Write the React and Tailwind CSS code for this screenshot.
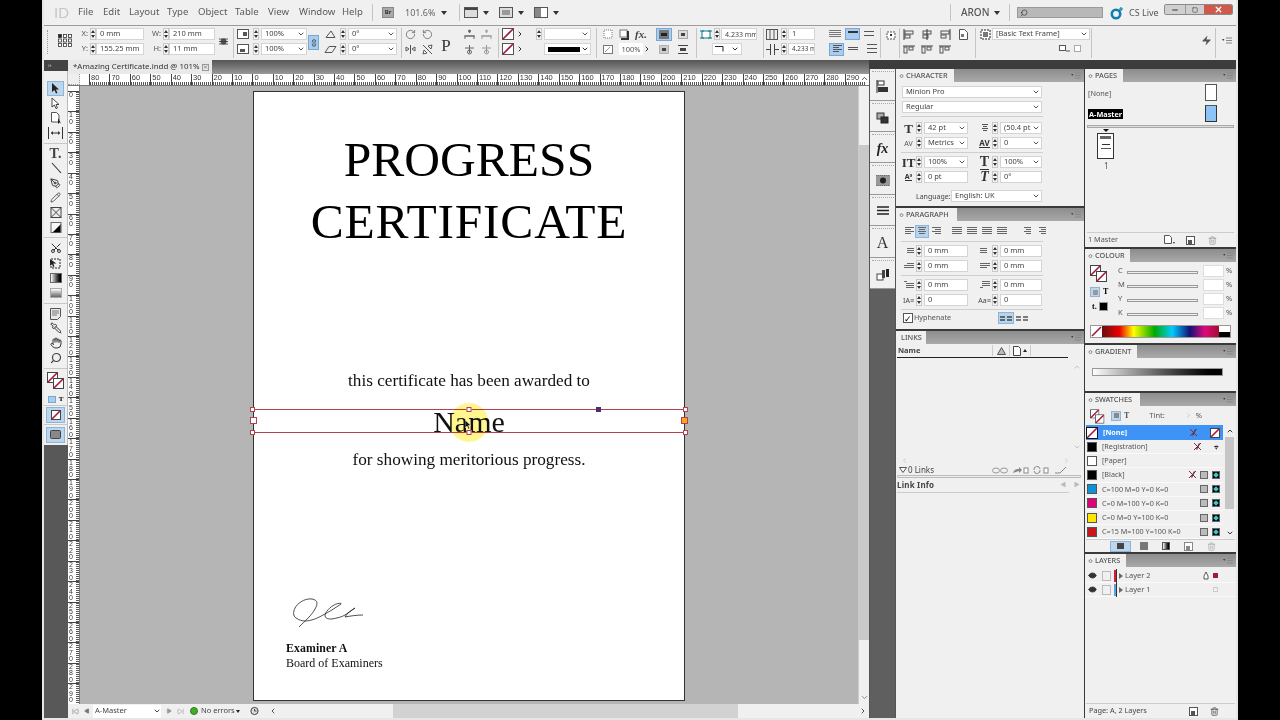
import { ChevronDown, ChevronUp, ChevronLeft, ChevronRight, Scissors, Hand, Search, Pipette, Pencil, PenTool, Eye, Trash2, Zap, RotateCw, RotateCcw, Link2, Minus, X, Square, SkipBack, SkipForward, Play } from "lucide-react";

const UI = "font-['Noto_Sans',sans-serif]";

function Ic({ w = 12, h = 12, children, className = "" }) {
  return <svg width={w} height={h} viewBox={`0 0 ${w} ${h}`} className={`shrink-0 ${className}`}>{children}</svg>;
}

// stacked little bars, used for all the align / justify glyphs
function Bars({ rows, w = 12, color = "#555" }) {
  return (
    <Ic w={w} h={rows.length * 2}>
      {rows.map((r, i) => <rect key={i} x={r[0]} y={i * 2} width={r[1]} height="1" fill={color} />)}
    </Ic>
  );
}

function NoneBox({ s = 12, border = "#444" }) {
  return (
    <Ic w={s} h={s}>
      <rect x=".5" y=".5" width={s - 1} height={s - 1} fill="#fff" stroke={border} />
      <line x1="1" y1={s - 1} x2={s - 1} y2="1" stroke="#a3173a" strokeWidth="1.6" />
    </Ic>
  );
}

function Spin() {
  return (
    <div className="w-[6px] h-[12px] shrink-0 flex flex-col items-center justify-center gap-[2px] bg-[#f6f6f6] border border-[#c8c8c8]">
      <div className="w-0 h-0 border-x-[2px] border-x-transparent border-b-[3px] border-b-[#333]" />
      <div className="w-0 h-0 border-x-[2px] border-x-transparent border-t-[3px] border-t-[#333]" />
    </div>
  );
}

function Box({ w, value = "", select, h = "h-[12px]", text = "text-[7.5px]" }) {
  return (
    <div style={{ width: w }} className={`${h} ${text} shrink-0 bg-white border border-[#d4d4d4] flex items-center justify-between pl-[3px] pr-[1px] text-[#444] leading-none whitespace-nowrap overflow-hidden`}>
      <span>{value}</span>
      {select && <ChevronDown size={8} strokeWidth={2.5} className="text-[#333] shrink-0" />}
    </div>
  );
}

function Label({ children, w = 14 }) {
  return <span style={{ width: w }} className="shrink-0 text-[7.5px] text-[#555] text-right pr-[2px] leading-none">{children}</span>;
}

function Divider({ ml = 3, mr = 3 }) {
  return <div style={{ marginLeft: ml, marginRight: mr }} className="w-px h-[30px] bg-[#c4c4c4] shrink-0" />;
}

function Col({ w, ml = 0, children }) {
  return <div style={{ width: w, marginLeft: ml }} className="shrink-0 flex flex-col gap-[3px]">{children}</div>;
}

function Row({ children, className = "" }) {
  return <div className={`h-[12px] flex items-center ${className}`}>{children}</div>;
}

function RefPoints() {
  const pts = [];
  for (let r = 0; r < 3; r++) for (let c = 0; c < 3; c++) pts.push([c, r]);
  return (
    <Ic w={14} h={13}>
      {pts.map(([c, r]) => (
        <rect key={`${c}${r}`} x={c * 5 + .5} y={r * 4.5 + .5} width="3" height="3" fill={c === 0 && r === 0 ? "#222" : "#fff"} stroke="#333" strokeWidth=".8" />
      ))}
    </Ic>
  );
}

function MiniBtn({ active, children }) {
  return (
    <div className={`w-[16px] h-[13px] flex items-center justify-center ${active ? "bg-[#a9cdf0] border border-[#7aa7d2]" : ""}`}>{children}</div>
  );
}

const ALIGN_ROWS = [[1, 9], [1, 6], [1, 9], [1, 6]];
const FULL_ROWS = [[0, 11], [0, 11], [0, 11], [0, 11]];

function MenuBar() {
  const items = [["File", 25], ["Edit", 26], ["Layout", 38], ["Type", 31], ["Object", 37], ["Table", 33], ["View", 31], ["Window", 43], ["Help", 30]];
  return (
    <div className={`h-[26px] shrink-0 bg-[#f0f0f0] border-b border-[#9c9c9c] flex items-center text-[#5a5a5a] text-[9.6px] ${UI}`}>
      <span className="w-[34px] pl-[10px] text-[15px] font-['Liberation_Sans',sans-serif] text-[#c6c6c6] leading-none">ID</span>
      {items.map(([t, w]) => <span key={t} style={{ width: w }} className="shrink-0">{t}</span>)}
      <div className="w-px h-[17px] bg-[#c4c4c4] mr-[9px]" />
      <div className="w-[12px] h-[11px] bg-[#a9a9a9] border border-[#888] text-[6px] text-[#333] flex items-center justify-center font-bold mr-[11px]">Br</div>
      <span className="w-[36px] text-[9px] text-[#666]">101.6%</span>
      <div className="w-0 h-0 border-x-[3px] border-x-transparent border-t-[4px] border-t-[#333] mr-[12px]" />
      <div className="w-px h-[17px] bg-[#c4c4c4] mr-[4px]" />
      {[0, 1, 2].map(i => (
        <div key={i} className="flex items-center w-[35px]">
          <Ic w={14} h={11}>
            <rect x=".5" y=".5" width="13" height="10" fill={i === 2 ? "#fff" : "#ddd"} stroke="#555" />
            {i === 0 && <rect x="1" y="1" width="12" height="2" fill="#444" />}
            {i === 1 && <rect x="3" y="3" width="8" height="5" fill="#999" />}
            {i === 2 && <rect x="1" y="1" width="6" height="9" fill="#888" />}
          </Ic>
          <div className="ml-[5px] w-0 h-0 border-x-[3px] border-x-transparent border-t-[4px] border-t-[#333]" />
        </div>
      ))}
      <div className="ml-auto w-px h-[17px] bg-[#c4c4c4] mr-[10px]" />
      <span className="text-[10px] font-medium text-[#555] w-[33px]">ARON</span>
      <div className="w-0 h-0 border-x-[3px] border-x-transparent border-t-[4px] border-t-[#333] mr-[9px]" />
      <div className="w-px h-[17px] bg-[#c4c4c4] mr-[7px]" />
      <div className="w-[86px] h-[11px] bg-[#b8b8b8] border border-[#9a9a9a] flex items-center pl-[2px] mr-[6px]">
        <Search size={8} className="text-[#333] -scale-x-100" />
      </div>
      <Ic w={15} h={14} className="mr-[5px]">
        <circle cx="7" cy="8" r="4.2" fill="none" stroke="#0c7fb0" strokeWidth="2.6" />
        <path d="M12 1v4M10 3h4" stroke="#0c7fb0" strokeWidth="1.2" />
      </Ic>
      <span className="text-[9px] text-[#555] w-[35px]">CS Live</span>
      <div className="flex h-[11px] mr-[3px] mb-[6px] border border-[#8a8a8a] rounded-[2px] overflow-hidden">
        <div className="w-[20px] bg-[#cfcfcf] flex items-center justify-center"><Minus size={8} strokeWidth={3} className="text-[#333]" /></div>
        <div className="w-[19px] bg-[#cfcfcf] border-l border-[#999] flex items-center justify-center"><Square size={6} strokeWidth={2} className="text-[#333]" /></div>
        <div className="w-[28px] bg-[#cd5a4b] flex items-center justify-center"><X size={9} strokeWidth={3.5} className="text-white" /></div>
      </div>
    </div>
  );
}

function ControlBar() {
  return (
    <div className={`h-[34px] shrink-0 bg-[#efefef] flex items-start pt-[2px] ${UI}`}>
      <div className="w-[8px] shrink-0 mt-[2px] ml-[3px] h-[24px] border-l border-dotted border-[#999]" />
      <div className="w-[19px] shrink-0 flex justify-center pt-[6px]"><RefPoints /></div>
      <Col w={72} ml={2}>
        <Row><Label>X:</Label><Spin /><Box w={48} value="0 mm" /></Row>
        <Row><Label>Y:</Label><Spin /><Box w={48} value="155.25 mm" /></Row>
      </Col>
      <Col w={68} ml={0}>
        <Row><Label w={15}>W:</Label><Spin /><Box w={46} value="210 mm" /></Row>
        <Row><Label w={15}>H:</Label><Spin /><Box w={46} value="11 mm" /></Row>
      </Col>
      <div className="w-[14px] shrink-0 flex justify-center pt-[9px]">
        <Ic w={9} h={9}><circle cx="4.5" cy="4.5" r="3" fill="#555" /><path d="M0 2h9M0 4.5h9M0 7h9" stroke="#333" strokeWidth=".8" /></Ic>
      </div>
      <Divider />
      <Col w={71}>
        <Row><Ic w={15} h={10} className="mr-[1px]"><rect x=".5" y=".5" width="11" height="9" fill="#fff" stroke="#555" /><rect x="6" y="3" width="4" height="4" fill="#555" /></Ic><Spin /><div className="w-[2px]" /><Box w={46} value="100%" select /></Row>
        <Row><Ic w={15} h={10} className="mr-[1px]"><rect x=".5" y=".5" width="11" height="9" fill="#fff" stroke="#555" /><rect x="3" y="5" width="5" height="3" fill="#555" /></Ic><Spin /><div className="w-[2px]" /><Box w={46} value="100%" select /></Row>
      </Col>
      <div className="w-[11px] h-[15px] mt-[7px] shrink-0 bg-[#a9cdf0] border border-[#7aa7d2] flex items-center justify-center"><Link2 size={8} className="rotate-90 text-[#222]" /></div>
      <Col w={76} ml={4}>
        <Row><Ic w={17} h={10}><path d="M3 8.5h9L8 2z" fill="none" stroke="#555" /></Ic><Spin /><div className="w-[2px]" /><Box w={49} value="0°" select /></Row>
        <Row><Ic w={17} h={10}><path d="M2 8.5h7l4-6H6z" fill="none" stroke="#555" /></Ic><Spin /><div className="w-[2px]" /><Box w={49} value="0°" select /></Row>
      </Col>
      <Divider ml={2} />
      <Col w={30}>
        <Row className="gap-[6px]"><RotateCw size={11} className="text-[#777]" /><RotateCcw size={11} className="text-[#777]" /></Row>
        <Row className="gap-[6px]">
          <Ic w={11} h={11}><path d="M5.5 1v9M1 3l3 2-3 2zM10 3L7 5l3 2z" fill="#fff" stroke="#555" /></Ic>
          <Ic w={11} h={11}><path d="M1 1l9 9M1 10l4-1-3-3zM10 1L6 2l3 3z" fill="#fff" stroke="#555" /></Ic>
        </Row>
      </Col>
      <div className="w-[22px] shrink-0 text-center font-['Liberation_Serif',serif] text-[17px] leading-none pt-[9px] text-[#333]">P</div>
      <Col w={34} ml={6}>
        <Row className="gap-[4px]">
          {[0, 1].map(i => <Ic key={i} w={13} h={11}><path d="M6.5 1v3M2 10V7h9v3M1 7h11" stroke={i ? "#999" : "#666"} fill="none" /><circle cx="6.5" cy="2" r="1.5" fill={i ? "#aaa" : "#666"} /></Ic>)}
        </Row>
        <Row className="gap-[4px]">
          {[0, 1].map(i => <Ic key={i} w={13} h={11}><path d="M6.5 1v8M2 4h9" stroke={i ? "#999" : "#666"} fill="none" /><circle cx="6.5" cy="8" r="2" fill="none" stroke={i ? "#999" : "#666"} /></Ic>)}
        </Row>
      </Col>
      <Divider ml={1} />
      <Col w={26}>
        <Row><NoneBox s={12} border="#555" /><ChevronRight size={8} strokeWidth={3} className="ml-[2px] text-[#333]" /></Row>
        <Row><NoneBox s={12} border="#555" /><ChevronRight size={8} strokeWidth={3} className="ml-[2px] text-[#333]" /></Row>
      </Col>
      <Col w={58} ml={8}>
        <Row><Spin /><div className="w-[2px]" /><Box w={47} select /></Row>
        <Row><div className="w-[8px] shrink-0" /><div className="w-[47px] h-[12px] bg-white border border-[#d4d4d4] flex items-center justify-between pl-[3px] pr-[1px]"><div className="w-[32px] h-[5px] bg-black" /><ChevronDown size={8} strokeWidth={2.5} /></div></Row>
      </Col>
      <Divider ml={2} />
      <Col w={52} ml={3}>
        <Row className="gap-[5px]">
          <Ic w={11} h={11}><rect x="1" y="1" width="8" height="8" fill="#fff" stroke="#777" strokeDasharray="1 1" /></Ic>
          <Ic w={11} h={11}><rect x="1" y="1" width="7" height="7" fill="#fff" stroke="#777" /><path d="M9 2v8H2" stroke="#333" strokeWidth="2" fill="none" /></Ic>
          <span className="font-['Liberation_Serif',serif] italic font-bold text-[11px] text-[#444] leading-none">fx.</span>
        </Row>
        <Row>
          <Ic w={11} h={11}><rect x=".5" y="1.5" width="9" height="8" fill="#fff" stroke="#777" /><path d="M2 8l5-5" stroke="#999" /></Ic>
          <span className="ml-[5px] w-[24px] bg-white text-[7.5px] text-[#555] text-center leading-[12px]">100%</span>
          <ChevronRight size={8} strokeWidth={3} className="text-[#333]" />
        </Row>
      </Col>
      <Col w={38} ml={1}>
        <Row className="gap-[3px]"><MiniBtn active><Ic w={10} h={9}><rect width="10" height="9" fill="#777" /><rect x="2" y="3" width="6" height="3" fill="#222" /></Ic></MiniBtn><MiniBtn><Ic w={10} h={9}><rect x=".5" y=".5" width="9" height="8" fill="#ddd" stroke="#666" strokeDasharray="1 1" /><rect x="3" y="3" width="4" height="3" fill="#444" /></Ic></MiniBtn></Row>
        <Row className="gap-[3px]"><MiniBtn><Ic w={10} h={9}><rect x=".5" y=".5" width="9" height="8" fill="#ccc" stroke="#888" strokeDasharray="1 1" /><rect x="3" y="3" width="4" height="3" fill="#444" /></Ic></MiniBtn><MiniBtn><Ic w={10} h={9}><path d="M0 .5h10M0 8.5h10" stroke="#444" /><rect x="2" y="3" width="6" height="3" fill="#444" /></Ic></MiniBtn></Row>
      </Col>
      <Divider ml={2} />
      <Col w={58}>
        <Row><Ic w={13} h={11} className="mr-[1px]"><rect x="2" y="2" width="8" height="7" fill="#fff" stroke="#0e7a8a" /><path d="M0 2h4M8 2h4M0 9h4M8 9h4" stroke="#0e7a8a" /></Ic><Spin /><div className="w-[1px]" /><Box w={36} text="text-[7px]" value="4.233 mm" /></Row>
        <Row className="pl-[12px]"><div className="w-[30px] h-[12px] bg-white border border-[#d4d4d4] flex items-center justify-between px-[2px]"><Ic w={11} h={6}><path d="M0 .5h8v5" stroke="#222" fill="none" /></Ic><ChevronDown size={8} strokeWidth={2.5} /></div></Row>
      </Col>
      <Divider ml={5} mr={2} />
      <Col w={58}>
        <Row><Ic w={13} h={11} className="mr-[2px]"><rect x=".5" y=".5" width="11" height="10" fill="#eee" stroke="#555" /><path d="M4 1v9M8 1v9" stroke="#555" /></Ic><Spin /><div className="w-[1px]" /><Box w={27} value="1" /></Row>
        <Row><Ic w={13} h={11} className="mr-[2px]"><path d="M4.5 0v11M8.5 0v11M0 5.5h4M9 5.5h4" stroke="#444" /></Ic><Spin /><div className="w-[1px]" /><Box w={27} text="text-[6.4px]" value="4.233 m" /></Row>
      </Col>
      <Col w={16} ml={5}>
        <Row><Bars w={12} color="#777" rows={[[0, 12], [0, 12], [0, 12], [0, 12]]} /></Row>
        <Row><div className="w-[15px] h-[13px] bg-[#a9cdf0] border border-[#7aa7d2] flex items-center justify-center"><Bars w={10} rows={ALIGN_ROWS} /></div></Row>
      </Col>
      <Col w={32}>
        <Row className="gap-[4px]"><div className="w-[15px] h-[12px] bg-[#a9cdf0] border border-[#7aa7d2] flex justify-center pt-[2px]"><div className="w-[10px] h-[2px] bg-[#333]" /></div><Bars w={10} rows={[[0, 10], [0, 0], [0, 10]]} /></Row>
        <Row className="gap-[4px] pl-[3px]"><Bars w={10} rows={[[0, 10], [0, 10]]} /><div className="w-[2px]" /><Bars w={10} rows={[[0, 10], [0, 0], [0, 10], [0, 0], [0, 10]]} /></Row>
      </Col>
      <Divider ml={3} mr={2} />
      <div className="w-[16px] shrink-0 flex justify-center pt-[2px]"><Ic w={12} h={11}><rect x="2" y="2" width="8" height="7" fill="#fff" stroke="#555" strokeDasharray="2 1" /><path d="M5 4h2v2H5z" fill="#333" /></Ic></div>
      <Divider ml={0} mr={3} />
      <Col w={52}>
        <Row className="gap-[5px]">
          {[0, 1, 2].map(i => <Ic key={i} w={13} h={11}><rect x="2" y="2" width="8" height="3" fill="#eee" stroke="#555" /><rect x="2" y="6" width="5" height="3" fill="#eee" stroke="#555" /><path d={i === 0 ? "M1 0v11" : i === 1 ? "M6 0v11" : "M11 0v11"} stroke="#333" /></Ic>)}
        </Row>
        <Row className="gap-[6px]">
          {[0, 1, 2].map(i => <Ic key={i} w={12} h={9}><rect x="1" y="2" width="3" height="6" fill="#eee" stroke="#555" /><rect x="6" y="2" width="4" height="3" fill="#eee" stroke="#555" /><path d="M0 1h12" stroke="#444" /></Ic>)}
        </Row>
      </Col>
      <div className="w-[20px] shrink-0 pt-[1px] pl-[3px]"><Ic w={11} h={11}><path d="M1.5.5h5l3 3v7h-8z" fill="#fff" stroke="#555" /><rect x="3" y="5" width="3" height="3" fill="#777" /></Ic></div>
      <Divider ml={0} mr={2} />
      <div className="w-[14px] shrink-0 pt-[1px] pl-[2px]"><Ic w={12} h={11}><rect x="1" y="1" width="9" height="9" fill="#fff" stroke="#222" strokeDasharray="2 1" /><rect x="3" y="3" width="5" height="5" fill="#777" /></Ic></div>
      <Col w={98}>
        <Box w={98} value="[Basic Text Frame]" select />
        <Row className="justify-end gap-[4px] pr-[7px]">
          <Ic w={11} h={8}><rect x=".5" y=".5" width="6" height="5" fill="#fff" stroke="#555" /><path d="M7 6h4" stroke="#555" /></Ic>
          <Ic w={9} h={8}><rect x=".5" y=".5" width="6" height="6" fill="#fff" stroke="#aaa" /></Ic>
        </Row>
      </Col>
      <Divider ml={1} mr={0} />
      <div className="ml-auto w-[10px] pt-[7px]"><Zap size={11} fill="#555" strokeWidth={0} /></div>
      <Divider ml={4} mr={0} />
      <div className="w-[20px] pt-[9px] pl-[6px]"><MenuIcon /></div>
    </div>
  );
}

function MenuIcon() {
  return (
    <Ic w={10} h={7}>
      <path d="M0 2h2.5L1.2 4z" fill="#444" />
      <path d="M4 1h6M4 3.5h6M4 6h6" stroke="#888" />
    </Ic>
  );
}

function ToolIcon({ active, children }) {
  return <div className={`mx-[3px] h-[14.8px] flex items-center justify-center ${active ? "bg-[#bcd6ee] border border-[#8fb4d8]" : ""}`}>{children}</div>;
}

function ToolSep() {
  return <div className="my-[2.5px] h-px bg-[#c8c8c8]" />;
}

function Toolbox() {
  return (
    <div className="w-[24px] shrink-0 flex flex-col bg-[#585858]">
      <div className="h-[11px] shrink-0 bg-[#444] text-[6px] text-[#ddd] leading-[11px] pl-[4px]">››</div>
      <div className="bg-[#f0f0f0] pt-[10px] pb-[2px] border-r border-[#bbb]">
        <ToolIcon active><Ic w={9} h={11}><path d="M1 0v9l2.4-2 1.6 3.6 1.4-.6L5 6.5h3z" fill="#222" /></Ic></ToolIcon>
        <ToolIcon><Ic w={9} h={11}><path d="M1 0v9l2.4-2 1.6 3.6 1.4-.6L5 6.5h3z" fill="#fff" stroke="#222" strokeWidth=".8" /></Ic></ToolIcon>
        <ToolIcon><Ic w={12} h={12}><path d="M1.5.5h5l2.5 2.5v7h-7.5z" fill="#fff" stroke="#555" /><path d="M8 6v6l1.5-1.5 1.5 1z" fill="#222" /></Ic></ToolIcon>
        <ToolIcon><Ic w={15} h={12}><path d="M.5 0v12M14.5 0v12M3 6h9" stroke="#333" /><path d="M3 6l2-2v4zM12 6l-2-2v4z" fill="#333" /></Ic></ToolIcon>
        <ToolSep />
        <ToolIcon><span className="font-['Liberation_Serif',serif] font-bold text-[14px] leading-none text-[#444]">T.</span></ToolIcon>
        <ToolIcon><Ic w={12} h={12}><path d="M2 1l9 10" stroke="#333" strokeWidth="1.1" /></Ic></ToolIcon>
        <ToolIcon><PenTool size={11} className="text-[#333]" /></ToolIcon>
        <ToolIcon><Pencil size={11} className="text-[#555]" /></ToolIcon>
        <ToolIcon><Ic w={12} h={11}><rect x="1" y=".5" width="10" height="10" fill="#eee" stroke="#444" /><path d="M1 .5l10 10M11 .5l-10 10" stroke="#444" /></Ic></ToolIcon>
        <ToolIcon><Ic w={12} h={11}><rect x="1" y=".5" width="10" height="10" fill="#f5f5f5" stroke="#666" /><path d="M11 2v9H2" stroke="#999" /></Ic></ToolIcon>
        <ToolSep />
        <ToolIcon><Scissors size={12} className="text-[#333] -rotate-90" /></ToolIcon>
        <ToolIcon><Ic w={13} h={11}><rect x="2" y="1" width="9" height="9" fill="none" stroke="#222" strokeDasharray="2 1" /><path d="M1 1v7l2-2 1 3 1.4-.5-1-3h3z" fill="#222" /></Ic></ToolIcon>
        <ToolIcon><div className="w-[12px] h-[10px] border border-[#666] bg-gradient-to-r from-white to-black" /></ToolIcon>
        <ToolIcon><div className="w-[12px] h-[10px] border border-[#aaa] bg-gradient-to-b from-white to-[#666]" /></ToolIcon>
        <ToolSep />
        <ToolIcon><Ic w={11} h={12}><path d="M.5.5h10v8l-3 3h-7z" fill="#e8e8e8" stroke="#555" /><path d="M2 3h7M2 5h7M2 7h5" stroke="#777" /></Ic></ToolIcon>
        <ToolIcon><Pipette size={12} className="text-[#333] -scale-x-100" /></ToolIcon>
        <ToolIcon><Hand size={12} className="text-[#333]" /></ToolIcon>
        <ToolIcon><Search size={12} strokeWidth={2.4} className="text-[#444] -scale-x-100" /></ToolIcon>
        <ToolSep />
        <div className="h-[20px] mx-[3px] mt-[3px]"><FillStroke /></div>
        <div className="h-[10px] mt-[3px] flex items-center justify-center gap-[3px]">
          <div className="w-[8px] h-[7px] bg-[#a9cdf0] border border-[#7aa7d2]" />
          <span className="font-['Liberation_Serif',serif] font-bold text-[7px] leading-none">T</span>
        </div>
        <div className="h-px bg-[#c8c8c8] mb-[1px]" />
        <div className="mx-[2px] h-[16px] bg-[#bcd6ee] border border-[#8fb4d8] flex items-center justify-center"><NoneBox s={10} /></div>
        <div className="h-px bg-[#c8c8c8] my-[1.5px]" />
        <div className="mx-[2px] h-[16px] bg-[#bcd6ee] border border-[#8fb4d8] flex items-center justify-center"><Ic w={11} h={9}><rect x=".5" y=".5" width="10" height="8" rx="1" fill="#888" stroke="#444" /></Ic></div>
      </div>
      <div className="flex-1 bg-[#585858]" />
    </div>
  );
}

function FillStroke() {
  return (
    <div className="w-[18px] h-[18px] relative">
      <div className="absolute left-0 top-0"><NoneBox s={11} /></div>
      <div className="absolute left-[6px] top-[6px]"><NoneBox s={11} /></div>
    </div>
  );
}

const H_RULER = [80, 70, 60, 50, 40, 30, 20, 10, 0, 10, 20, 30, 40, 50, 60, 70, 80, 90, 100, 110, 120, 130, 140, 150, 160, 170, 180, 190, 200, 210, 220, 230, 240, 250, 260, 270, 280, 290];
const V_RULER = Array.from({ length: 30 }, (_, i) => i * 10);

function HRuler() {
  return (
    <div className="h-[12px] shrink-0 flex bg-white border-b border-[#777]">
      <div className="w-[12px] shrink-0 bg-[#eee] border-r border-b border-[#999] border-dotted" />
      <div className="w-[9px] shrink-0" />
      <div className="flex-1 overflow-hidden flex font-['Liberation_Sans',sans-serif]">
        {H_RULER.map((n, i) => (
          <div key={i} className="w-[20.43px] shrink-0 h-full border-l border-[#444] relative text-[7.5px] leading-[8px] pl-[1px] text-[#333]">
            {n}
            <div className="absolute left-0 right-0 bottom-0 h-[3px] bg-[repeating-linear-gradient(90deg,#555_0,#555_1px,transparent_1px,transparent_2.04px)]" />
          </div>
        ))}
      </div>
    </div>
  );
}

function VRuler() {
  return (
    <div className="w-[12px] shrink-0 bg-white border-r border-[#777] overflow-hidden font-['Liberation_Sans',sans-serif] pt-[5px]">
      {V_RULER.map(n => (
        <div key={n} className="h-[20.43px] border-t border-[#444] relative text-[7px] leading-[6.4px] pl-[1px] text-[#333]">
          {String(n).split("").map((d, i) => <div key={i}>{d}</div>)}
          <div className="absolute top-0 bottom-0 right-0 w-[3px] bg-[repeating-linear-gradient(180deg,#555_0,#555_1px,transparent_1px,transparent_2.04px)]" />
        </div>
      ))}
    </div>
  );
}

function Handle({ className }) {
  return <div className={`absolute w-[5px] h-[5px] bg-white border border-[#b4414e] ${className}`} />;
}

function CertificatePage() {
  return (
    <div className="w-[432px] h-[610px] bg-white border border-[#333] font-['Liberation_Serif',serif] text-[#111] shrink-0 flex flex-col">
      <h1 className="mt-[37px] text-center text-[49.5px] leading-[62px] text-black font-normal">
        <span className="block">PROGRESS</span>
        <span className="block tracking-[.8px]">CERTIFICATE</span>
      </h1>
      <p className="mt-[118px] text-center text-[17.2px] leading-[20px]">this certificate has been awarded to</p>
      <div className="mt-[18px] h-[24px] relative text-center border-y border-[#b4414e] -mx-px">
        <div className="absolute left-1/2 top-[-7px] -translate-x-1/2 w-[39px] h-[39px] rounded-full bg-[#fff68f] mix-blend-multiply" />
        <span className="relative text-[30px] leading-[24px] block mix-blend-multiply">Name</span>
        <Handle className="left-[-3px] top-[-3px]" />
        <Handle className="right-[-3px] top-[-3px]" />
        <Handle className="left-[-3px] bottom-[-3px]" />
        <Handle className="right-[-3px] bottom-[-3px]" />
        <Handle className="left-1/2 -translate-x-1/2 top-[-3px]" />
        <Handle className="left-1/2 -translate-x-1/2 bottom-[-3px]" />
        <div className="absolute left-[-3px] top-[7px] w-[7px] h-[7px] bg-white border border-[#b4414e]" />
        <div className="absolute right-[-3px] top-[7px] w-[7px] h-[7px] bg-[#f7a81b] border border-[#b4414e]" />
        <div className="absolute left-[343px] top-[-3px] w-[5px] h-[5px] bg-[#46326e]" />
        <div className="absolute left-[212px] top-[10px]">
          <Ic w={7} h={9}><path d="M0 0v8l2-2 1.4 3 1.2-.5L3.4 5.6H6z" fill="#111" stroke="#fff" strokeWidth=".5" /></Ic>
        </div>
      </div>
      <p className="mt-[17px] text-center text-[17.2px] leading-[20px]">for showing meritorious progress.</p>
      <div className="mt-[128px] ml-[38px]">
        <svg width="76" height="34" viewBox="0 0 76 34" fill="none" stroke="#222" strokeWidth=".8" className="block">
          <path d="M7 29C13 23 20 17 23 11c3-5 3-9-3-10C12 0 5 6 3 10c-2 4-2 8 1 10 3 2 6 3 9 3 6 0 13-3 18-6 6-3 12-7 18-11 1-1-3-1-6 .5C38 9 33 14 33 18c1 3 4 3 7 3 5-1 10-2 13-4 3-2 7-5 10-7-3 2-8 5-10 9 5-1 12-2 18-2" />
        </svg>
        <p className="mt-[9px] ml-[-6px] text-[11.8px] font-bold leading-[15px] tracking-[.1px]">Examiner A</p>
        <p className="ml-[-6px] text-[12px] leading-[15px]">Board of Examiners</p>
      </div>
    </div>
  );
}

function DocArea() {
  return (
    <div className="flex-1 flex flex-col min-w-0">
      <div className="h-[14px] shrink-0 flex bg-gradient-to-b from-[#555] to-[#999]">
        <div className={`w-[144px] bg-[#e9e9e9] flex items-center pl-[5px] text-[7.9px] text-[#333] leading-none ${UI}`}>
          <span className="flex-1 whitespace-nowrap">*Amazing Certificate.indd @ 101%</span>
          <div className="w-[7px] h-[7px] mr-[3px] border border-[#999] flex items-center justify-center"><X size={6} strokeWidth={3} className="text-[#555]" /></div>
        </div>
      </div>
      <HRuler />
      <div className="flex-1 flex min-h-0">
        <VRuler />
        <div className="flex-1 bg-[#b5b5b5] pl-[173px] pt-[5px] overflow-hidden min-w-0"><CertificatePage /></div>
        <div className="w-[11px] shrink-0 bg-[#f0f0f0] flex flex-col items-center border-l border-[#ccc]">
          <ChevronUp size={9} strokeWidth={2.5} className="text-[#444] mt-[-12px] mb-[62px]" />
          <div className="w-full h-[495px] bg-[#c9c9c9]" />
          <div className="flex-1" />
          <ChevronDown size={9} strokeWidth={2.5} className="text-[#888] mb-[2px]" />
        </div>
      </div>
      <div className={`h-[14px] shrink-0 bg-[#f0f0f0] flex items-center text-[7.5px] text-[#444] ${UI}`}>
        <SkipBack size={7} className="ml-[4px] text-[#777]" />
        <Play size={6} className="ml-[5px] rotate-180 text-[#777]" fill="#777" />
        <div className="ml-[3px] w-[68px] h-[13px] bg-white flex items-center justify-between pl-[2px]">A-Master<ChevronDown size={8} strokeWidth={2.5} className="text-[#222]" /></div>
        <Play size={6} className="ml-[5px] text-[#999]" fill="#999" />
        <SkipForward size={7} className="ml-[5px] text-[#999]" />
        <div className="ml-[6px] w-[8px] h-[8px] rounded-full bg-[#3fae2a] border border-[#2a7e1a]" />
        <span className="ml-[3px] w-[35px]">No errors</span>
        <div className="w-0 h-0 border-x-[2px] border-x-transparent border-t-[3px] border-t-[#222] mr-[10px]" />
        <Ic w={11} h={10}><circle cx="4.5" cy="5" r="3.6" fill="#ddd" stroke="#444" /><path d="M4.5 3v2h2" stroke="#444" fill="none" /></Ic>
        <ChevronLeft size={8} strokeWidth={2.5} className="ml-[8px] text-[#333]" />
        <div className="ml-[116px] w-[345px] h-full bg-[#d2d2d2]" />
        <div className="flex-1" />
        <ChevronRight size={8} strokeWidth={2.5} className="mr-[2px] text-[#333]" />
      </div>
    </div>
  );
}

function DockItem({ h, children }) {
  return (
    <div style={{ height: h }} className="shrink-0 bg-[#f0f0f0] border-b border-[#999] flex flex-col items-center">
      <div className="w-[22px] mt-[2px] border-t border-dotted border-[#aaa]" />
      <div className="flex-1 flex items-center justify-center">{children}</div>
    </div>
  );
}

function Dock() {
  return (
    <div className="w-[27px] shrink-0 flex flex-col bg-[#5f5f5f] border-x border-[#555]">
      <DockItem h={32}><Ic w={13} h={13}><path d="M1 0v13" stroke="#222" /><rect x="2" y="1" width="6" height="4" fill="#fff" stroke="#333" /><rect x="2" y="7" width="10" height="5" fill="#333" /></Ic></DockItem>
      <DockItem h={31}><Ic w={13} h={12}><rect x="1" y="1" width="7" height="6" fill="#aaa" stroke="#333" /><rect x="5" y="5" width="7" height="6" fill="#333" stroke="#222" /></Ic></DockItem>
      <DockItem h={31}><span className="font-['Liberation_Serif',serif] italic font-bold text-[14px] text-[#222] leading-none">fx</span></DockItem>
      <DockItem h={32}><Ic w={14} h={11}><rect x="0" y="0" width="14" height="11" fill="#999" /><circle cx="7" cy="5.5" r="3" fill="#222" /><path d="M0 0h14M0 11h14" stroke="#444" strokeDasharray="1 1" /></Ic></DockItem>
      <DockItem h={31}><Ic w={14} h={11}><path d="M1 1h12M1 4.5h12M1 8h12" stroke="#222" strokeWidth="1.3" /></Ic></DockItem>
      <DockItem h={32}><span className="font-['Liberation_Serif',serif] text-[16px] text-[#333] leading-none">A</span></DockItem>
      <DockItem h={31}><Ic w={14} h={13}><rect x="1" y="6" width="6" height="6" fill="#fff" stroke="#444" /><rect x="6" y="2" width="3" height="8" fill="#444" /><rect x="10" y="1" width="3" height="8" fill="#222" /></Ic></DockItem>
      <div className="flex-1" />
    </div>
  );
}

function PanelHead({ title, tabW, collapse = true }) {
  return (
    <div className="h-[13px] shrink-0 flex bg-gradient-to-b from-[#8d8d8d] to-[#a9a9a9]">
      <div style={{ width: tabW }} className="bg-[#f0f0f0] flex items-center pl-[3px] text-[7.3px] font-medium text-[#555] leading-none whitespace-nowrap">
        {collapse && <span className="mr-[2px] text-[6px]">≎</span>}
        {title}
      </div>
      <div className="ml-auto pr-[3px] pt-[3px]"><MenuIcon /></div>
    </div>
  );
}

function PRow({ icon, value, select, w = 43, iw = 15 }) {
  return (
    <div className="flex items-center h-[12px]">
      <div style={{ width: iw }} className="shrink-0 flex justify-center">{icon}</div>
      <Spin />
      <div className="w-[2px]" />
      <Box w={w} value={value} select={select} />
    </div>
  );
}

const serifIcon = (t, cls = "") => <span className={`font-['Liberation_Serif',serif] font-bold text-[#333] text-[13px] leading-none ${cls}`}>{t}</span>;

function CharacterPanel() {
  return (
    <div className="h-[137px] shrink-0 bg-[#f0f0f0] flex flex-col">
      <PanelHead title="CHARACTER" tabW={58} />
      <div className="pl-[6px] pt-[4px] pr-[42px] flex flex-col gap-[3px]">
        <Box w={140} value="Minion Pro" select h="h-[12px]" />
        <Box w={140} value="Regular" select />
      </div>
      <div className="mx-[5px] w-[142px] h-px bg-[#cfcfcf] mt-[3px] mb-[5px]" />
      <div className="pl-[5px] flex flex-col gap-[3px]">
        <div className="flex gap-[9px]"><PRow icon={serifIcon("T")} value="42 pt" select w={44} /><PRow icon={<Bars w={10} rows={[[2, 6], [3, 4], [2, 6], [3, 4]]} />} value="(50.4 pt" select w={42} /></div>
        <div className="flex gap-[9px]"><PRow icon={<span className="text-[7px] leading-none text-[#555]">AV</span>} value="Metrics" select w={44} /><PRow icon={<span className="text-[8px] font-bold leading-none border-b border-[#333] text-[#333]">AV</span>} value="0" select w={42} /></div>
      </div>
      <div className="mx-[5px] w-[142px] h-px bg-[#cfcfcf] mt-[3px] mb-[3px]" />
      <div className="pl-[5px] flex flex-col gap-[3px]">
        <div className="flex gap-[9px]"><PRow icon={serifIcon("IT")} value="100%" select w={44} /><PRow icon={serifIcon("T", "border-b border-[#333] text-[14px]")} value="100%" select w={42} /></div>
        <div className="flex gap-[9px]"><PRow icon={<span className="text-[7px] font-bold leading-none border-b border-[#333] text-[#333]">Aª</span>} value="0 pt" w={44} /><PRow icon={serifIcon("T", "italic text-[14px]")} value="0°" w={42} /></div>
      </div>
      <div className="flex items-center mt-[7px] pl-[20px]">
        <span className="w-[35px] text-[7px] text-[#444] leading-none whitespace-nowrap">Language:</span>
        <Box w={91} value="English: UK" select />
      </div>
    </div>
  );
}

function ParagraphPanel() {
  const G = ({ rows }) => <Bars w={10} color="#666" rows={rows} />;
  return (
    <div className="h-[121px] shrink-0 bg-[#f0f0f0] flex flex-col mt-[2px]">
      <PanelHead title="PARAGRAPH" tabW={61} />
      <div className="flex items-center h-[14px] mt-[3px] pl-[6px]">
        <div className="w-[13px] flex justify-center"><G rows={ALIGN_ROWS} /></div>
        <div className="w-[14px] h-[13px] bg-[#b7d4ef] border border-[#8fb4d8] flex items-center justify-center"><G rows={[[1, 8], [2, 6], [1, 8], [2, 6]]} /></div>
        <div className="w-[13px] flex justify-center"><G rows={[[1, 9], [4, 6], [1, 9], [4, 6]]} /></div>
        <div className="w-[7px]" />
        {[0, 1, 2, 3].map(i => <div key={i} className="w-[15px] flex justify-center"><G rows={FULL_ROWS} /></div>)}
        <div className="w-[9px]" />
        {[0, 1].map(i => <div key={i} className="w-[15px] flex justify-center"><G rows={[[3, 8], [5, 6], [3, 8], [5, 6]]} /></div>)}
      </div>
      <div className="mx-[5px] w-[142px] h-px bg-[#cfcfcf] mt-[3px] mb-[3px]" />
      <div className="pl-[5px] flex flex-col gap-[3px]">
        <div className="flex gap-[9px]"><PRow icon={<G rows={[[3, 7], [3, 7], [3, 7]]} />} value="0 mm" w={44} /><PRow icon={<G rows={[[0, 7], [0, 7], [0, 7]]} />} value="0 mm" w={42} /></div>
        <div className="flex gap-[9px]"><PRow icon={<G rows={[[3, 7], [0, 10], [0, 10]]} />} value="0 mm" w={44} /><PRow icon={<G rows={[[0, 10], [0, 10], [0, 7]]} />} value="0 mm" w={42} /></div>
      </div>
      <div className="mx-[5px] w-[142px] h-px bg-[#cfcfcf] mt-[3px] mb-[3px]" />
      <div className="pl-[5px] flex flex-col gap-[3px]">
        <div className="flex gap-[9px]"><PRow icon={<G rows={[[0, 3], [2, 8], [2, 8], [2, 8]]} />} value="0 mm" w={44} /><PRow icon={<G rows={[[2, 8], [2, 8], [2, 8], [0, 3]]} />} value="0 mm" w={42} /></div>
        <div className="flex gap-[9px]"><PRow icon={<span className="text-[7px] leading-none text-[#444]">IA≡</span>} value="0" w={44} /><PRow icon={<span className="text-[7px] leading-none text-[#444]">Aa≡</span>} value="0" w={42} /></div>
      </div>
      <div className="mx-[5px] w-[142px] h-px bg-[#cfcfcf] mt-[3px]" />
      <div className="flex items-center h-[14px] pl-[7px] mt-[1px]">
        <div className="w-[10px] h-[10px] bg-white border border-[#555] flex items-center justify-center text-[9px] leading-none text-black">✓</div>
        <span className="ml-[1px] text-[7.2px] text-[#555] w-[84px] leading-none">Hyphenate</span>
        <div className="w-[16px] h-[12px] bg-[#b7d4ef] border border-[#8fb4d8] flex items-center justify-center"><Ic w={12} h={5}><path d="M0 1h5M7 1h5M0 4h5M7 4h5" stroke="#444" strokeWidth="1.4" /></Ic></div>
        <div className="w-[16px] flex items-center justify-center"><Ic w={12} h={5}><path d="M0 1h5M7 1h5M0 4h5M7 4h5" stroke="#555" strokeWidth="1.4" /></Ic></div>
      </div>
    </div>
  );
}

function LinksPanel() {
  return (
    <div className="flex-1 bg-[#f0f0f0] flex flex-col mt-[2px] min-h-0">
      <PanelHead title={<span className="pl-[2px]">LINKS</span>} tabW={30} collapse={false} />
      <div className="h-[13px] flex items-center text-[7.5px] font-bold text-[#444] pl-[1px] leading-none mx-px">
        <span className="w-[94px]">Name</span>
        <div className="w-px h-[11px] bg-[#ccc]" />
        <div className="w-[16px] flex justify-center"><Ic w={9} h={8}><path d="M4.5.5l4 7h-8z" fill="#bbb" stroke="#555" /></Ic></div>
        <div className="w-px h-[11px] bg-[#ccc]" />
        <div className="w-[20px] flex justify-center items-center gap-[2px]"><Ic w={8} h={10}><path d="M.5.5h5l2 2v7h-7z" fill="#fff" stroke="#444" /></Ic><div className="w-0 h-0 border-x-[2px] border-x-transparent border-b-[3px] border-b-[#222]" /></div>
        <div className="w-px h-[11px] bg-[#ccc]" />
      </div>
      <div className="h-px mx-px w-[171px] bg-[#222]" />
      <div className="h-[98px] flex justify-end pr-[2px]">
        <div className="flex flex-col justify-between w-[10px] items-center py-[5px]"><ChevronUp size={8} className="text-[#bbb]" strokeWidth={2.5} /><ChevronDown size={8} className="text-[#bbb]" strokeWidth={2.5} /></div>
      </div>
      <div className="h-[8px] flex items-center justify-between pl-[5px] pr-[14px]"><ChevronLeft size={7} className="text-[#bbb]" strokeWidth={2.5} /><ChevronRight size={7} className="text-[#bbb]" strokeWidth={2.5} /></div>
      <div className="h-[10px] mt-[1px] flex items-center pl-[3px] text-[8px] text-[#444] leading-none">
        <Ic w={8} h={6}><path d="M.5.5h7l-3.5 5z" fill="#fff" stroke="#555" /></Ic>
        <span className="ml-[1px] w-[84px]">0 Links</span>
        <Ic w={16} h={7}><ellipse cx="4" cy="3.5" rx="3.5" ry="2.5" fill="none" stroke="#999" /><ellipse cx="12" cy="3.5" rx="3.5" ry="2.5" fill="none" stroke="#999" /></Ic>
        <div className="w-[5px]" />
        <Ic w={16} h={8}><path d="M0 7c1-3 3-4 6-4V1l3 3-3 3V5" fill="#888" /><rect x="11" y="2" width="4" height="5" fill="#fff" stroke="#888" /></Ic>
        <div className="w-[4px]" />
        <Ic w={16} h={8}><path d="M1 4a3 3 0 016-1M7 4a3 3 0 01-6 1" stroke="#888" fill="none" /><rect x="11" y="2" width="4" height="5" fill="#fff" stroke="#888" /></Ic>
        <div className="w-[6px]" />
        <Ic w={12} h={8}><path d="M0 7h5L11 1" stroke="#888" fill="none" /></Ic>
      </div>
      <div className="mx-px w-[184px] h-[3px] border border-[#bbb] bg-[#eee] rounded-[1px]" />
      <div className="h-[13px] flex items-center pl-[1px] pr-[4px] text-[8px] font-bold text-[#444] tracking-[.2px] leading-none">
        <span className="flex-1">Link Info</span>
        <Play size={7} fill="#bbb" strokeWidth={0} className="rotate-180" />
        <Play size={7} fill="#bbb" strokeWidth={0} className="ml-[6px]" />
      </div>
      <div className="mx-px mt-[1px] w-[172px] h-px bg-[#ccc]" />
      <div className="flex-1" />
    </div>
  );
}

function PagesPanel() {
  return (
    <div className="h-[178px] shrink-0 bg-[#f0f0f0] flex flex-col">
      <PanelHead title="PAGES" tabW={38} />
      <div className="h-[43px] flex flex-col text-[7.3px] text-[#555] leading-none">
        <div className="h-[17px] mt-[2px] flex items-center pl-[3px]">
          <span className="flex-1 mt-[3px]">[None]</span>
          <div className="w-[12px] h-[17px] bg-white border border-[#555] mr-[19px] shrink-0" />
        </div>
        <div className="h-[17px] mt-[4px] flex items-center pl-[3px]">
          <span className="flex-1 mt-[2px]"><span className="bg-black text-white font-bold px-px">A-Master</span></span>
          <div className="w-[12px] h-[17px] bg-[#8cc4f8] border border-[#333] border-t-[#555] mr-[19px] shrink-0" />
        </div>
      </div>
      <div className="mx-[2px] h-[3px] bg-[#ddd] border border-[#aaa]" />
      <div className="flex-1 flex flex-col items-start pl-[12px] pt-[1px]">
        <div className="w-0 h-0 ml-[6px] border-x-[3px] border-x-transparent border-t-[3px] border-t-[#111]" />
        <div className="w-[17px] h-[26px] bg-white border border-[#333] mt-[1px] flex flex-col items-center gap-[3px] pt-[2px]">
          <div className="w-[11px] h-[3px] bg-[#666]" />
          <div className="w-[8px] h-[1px] bg-[#333] mt-[2px]" />
          <div className="w-[10px] h-[1px] bg-[#555]" />
        </div>
        <span className="text-[8px] text-[#555] ml-[7px] mt-[3px] leading-none">1</span>
      </div>
      <div className="h-px mx-[2px] bg-[#ccc]" />
      <div className="h-[14px] flex items-center pl-[3px] pr-[3px] text-[7.3px] text-[#555] leading-none">
        <span className="w-[75px]">1 Master</span>
        <Ic w={13} h={10}><path d="M1.5.5h5l2 2v6h-7z" fill="#fff" stroke="#555" /><path d="M10 7l2 0-1 2z" fill="#333" /></Ic>
        <div className="w-[10px]" />
        <Ic w={9} h={9}><rect x=".5" y=".5" width="8" height="8" fill="#fff" stroke="#555" /><rect x="2" y="4" width="4" height="4" fill="#555" /></Ic>
        <div className="w-[13px]" />
        <Trash2 size={9} className="text-[#999]" />
      </div>
    </div>
  );
}

function ColourPanel() {
  const rows = [["C"], ["M"], ["Y"], ["K"]];
  return (
    <div className="h-[94px] shrink-0 bg-[#f0f0f0] flex flex-col mt-[2px]">
      <PanelHead title="COLOUR" tabW={45} />
      <div className="flex pt-[3px] pl-[5px]">
        <div className="w-[28px] shrink-0 flex flex-col">
          <div className="h-[21px]"><FillStroke /></div>
          <div className="flex items-center gap-[3px] mt-[1px]">
            <div className="w-[10px] h-[10px] bg-[#bcd6ee] border border-[#8fb4d8] flex items-center justify-center"><div className="w-[5px] h-[5px] bg-[#999]" /></div>
            <span className="font-['Liberation_Serif',serif] font-bold text-[8px] leading-none">T</span>
          </div>
          <div className="flex items-center gap-[2px] mt-[5px]">
            <span className="font-['Liberation_Serif',serif] font-bold text-[8px] leading-none pl-[2px]">t.</span>
            <div className="w-[9px] h-[9px] bg-black border border-[#999]" />
          </div>
        </div>
        <div className="flex flex-col gap-[2px]">
          {rows.map(([l]) => (
            <div key={l} className="h-[12px] flex items-center text-[7.5px] text-[#555] leading-none">
              <span className="w-[9px]">{l}</span>
              <div className="w-[71px] h-[3px] border border-t-0 border-[#999] mt-[2px]"><div className="h-px bg-[#999]" /></div>
              <div className="ml-[5px] w-[21px] h-[12px] bg-white border border-[#ddd]" />
              <span className="ml-[2px]">%</span>
            </div>
          ))}
        </div>
      </div>
      <div className="mx-[5px] mt-[6px] h-[13px] w-[141px] flex border border-[#999]">
        <NoneBox s={11} border="#fff" />
        <div className="flex-1 bg-[linear-gradient(90deg,#611,#e00_15%,#ff0_27%,#0a0_45%,#0cf_60%,#117_75%,#e0087a_88%,#a01030_100%)]" />
        <div className="w-[11px] flex flex-col"><div className="flex-1 bg-white" /><div className="flex-1 bg-black" /></div>
      </div>
    </div>
  );
}

function GradientPanel() {
  return (
    <div className="h-[46px] shrink-0 bg-[#f0f0f0] flex flex-col mt-[2px]">
      <PanelHead title="GRADIENT" tabW={52} />
      <div className="mt-[10px] mx-[7px] w-[131px] h-[8px] border border-[#999] bg-gradient-to-r from-white to-black" />
    </div>
  );
}

const SWATCHES = [
  { name: "[Registration]", color: "#000", x: true, reg: true },
  { name: "[Paper]", color: "#fff" },
  { name: "[Black]", color: "#000", x: true, pair: true },
  { name: "C=100 M=0 Y=0 K=0", color: "#0b93d6", pair: true },
  { name: "C=0 M=100 Y=0 K=0", color: "#e2007a", pair: true },
  { name: "C=0 M=0 Y=100 K=0", color: "#ffe800", pair: true },
  { name: "C=15 M=100 Y=100 K=0", color: "#c8161e", pair: true },
];

function CrossPencil() {
  return <Ic w={9} h={9}><path d="M1 1l7 7M8 1L1 8" stroke="#a3173a" strokeWidth="1" /><path d="M3 7l3-6 1 1-3 6z" fill="#444" /></Ic>;
}

function CmykPair() {
  return (
    <>
      <div className="w-[8px] h-[8px] bg-[#bbb] border border-[#666]" />
      <div className="w-[8px] h-[8px] ml-[4px] bg-black border border-[#666] flex items-center justify-center"><div className="w-[4px] h-[4px] bg-[#3cc] rotate-45" /></div>
    </>
  );
}

function SwatchesPanel() {
  return (
    <div className="h-[159px] shrink-0 bg-[#f0f0f0] flex flex-col mt-[2px]">
      <PanelHead title="SWATCHES" tabW={55} />
      <div className="h-[19px] shrink-0 flex items-center pl-[5px] text-[7.5px] text-[#555] leading-none">
        <div className="w-[16px] h-[16px] scale-[.85] origin-left"><FillStroke /></div>
        <div className="ml-[5px] w-[10px] h-[10px] bg-[#bcd6ee] border border-[#8fb4d8] flex items-center justify-center"><div className="w-[5px] h-[5px] bg-[#888]" /></div>
        <span className="ml-[3px] font-['Liberation_Serif',serif] font-bold text-[8px]">T</span>
        <span className="ml-[20px]">Tint:</span>
        <ChevronRight size={7} className="ml-[20px] text-[#bbb]" strokeWidth={2.5} />
        <span className="ml-[4px]">%</span>
      </div>
      <div className="flex">
        <div className="w-[137px] flex flex-col ml-px text-[7.2px] text-[#555] leading-none">
          <div className="h-[15px] bg-[#3d94f6] flex items-center font-bold text-white">
            <NoneBox s={12} border="#111" />
            <span className="ml-[5px] flex-1">[None]</span>
            <CrossPencil />
            <div className="w-[12px]" />
            <NoneBox s={10} />
            <div className="w-[3px]" />
          </div>
          {SWATCHES.map(s => (
            <div key={s.name} className="h-[14.2px] flex items-center border-b border-[#fafafa]">
              <div style={{ backgroundColor: s.color }} className="w-[10px] h-[10px] ml-[1px] border border-[#555] shrink-0" />
              <span className="ml-[5px] flex-1 whitespace-nowrap">{s.name}</span>
              {s.x && <CrossPencil />}
              {s.reg && <span className="ml-[12px] mr-[4px] text-[8px] text-[#333]">⌖</span>}
              {s.pair && <div className="ml-[3px] mr-[3px] flex"><CmykPair /></div>}
            </div>
          ))}
        </div>
        <div className="w-[9px] ml-[2px] flex flex-col items-center">
          <ChevronUp size={8} strokeWidth={3} className="text-[#333] my-[2px]" />
          <div className="w-full h-[72px] bg-[#c6c6c6]" />
          <div className="flex-1" />
          <ChevronDown size={8} strokeWidth={3} className="text-[#333] mb-[2px]" />
        </div>
      </div>
      <div className="h-px bg-[#ccc] mx-px" />
      <div className="flex-1 flex items-center pl-[30px] gap-[14px]">
        <div className="w-[21px] h-[11px] -mx-[5px] bg-[#bcd6ee] border border-[#8fb4d8] flex items-center justify-center"><div className="w-[7px] h-[6px] bg-[#444]" /></div>
        <div className="w-[8px] h-[8px] bg-[#777]" />
        <div className="w-[8px] h-[8px] bg-gradient-to-r from-white to-black border border-[#555]" />
        <Ic w={9} h={9}><rect x=".5" y=".5" width="8" height="8" fill="#fff" stroke="#888" /><rect x="2" y="4" width="4" height="4" fill="#888" /></Ic>
        <Trash2 size={9} className="text-[#aaa]" />
      </div>
    </div>
  );
}

function LayerRow({ name, color, lock }) {
  return (
    <div className="h-[14px] flex items-center border-b border-[#fafafa] text-[7.5px] text-[#555] leading-none">
      <div className="w-[12px] flex justify-center ml-px"><Eye size={9} fill="#333" className="text-[#333]" /></div>
      <div className="w-[9px] h-[10px] ml-[4px] border border-[#bbb]" />
      <div style={{ backgroundColor: color }} className="w-[2px] h-[12px] ml-[3px]" />
      <div className="w-px h-[14px] bg-[#333] mr-[2px]" />
      <div className="w-0 h-0 border-y-[3px] border-y-transparent border-l-[4px] border-l-[#666] mr-[2px]" />
      <span className="w-[78px]">{name}</span>
      {lock ? <Ic w={6} h={8}><path d="M3 0l2 4v3H1V4z" fill="#fff" stroke="#333" strokeWidth=".8" /></Ic> : <div className="w-[6px]" />}
      <div className={`ml-[4px] w-[5px] h-[5px] ${lock ? "bg-[#a3173a]" : "border border-[#ccc]"}`} />
    </div>
  );
}

function LayersPanel() {
  return (
    <div className="flex-1 bg-[#f0f0f0] flex flex-col mt-[2px] min-h-0">
      <PanelHead title="LAYERS" tabW={41} />
      <div className="mt-[2px] flex-1">
        <LayerRow name="Layer 2" color="#d3202a" lock />
        <LayerRow name="Layer 1" color="#5d9fe0" />
      </div>
      <div className="h-px mx-px bg-[#ccc]" />
      <div className="h-[14px] flex items-center pl-[4px] text-[7.3px] text-[#444] leading-none">
        <span className="w-[100px]">Page: A, 2 Layers</span>
        <Ic w={9} h={9}><rect x=".5" y=".5" width="8" height="8" fill="#fff" stroke="#555" /><rect x="2" y="4" width="4" height="4" fill="#555" /></Ic>
        <div className="w-[12px]" />
        <Trash2 size={9} className="text-[#444]" />
      </div>
    </div>
  );
}

export default function App() {
  return (
    <div className={`w-[1280px] h-[720px] bg-black flex justify-center overflow-hidden ${UI}`}>
      <div className="w-[1196px] h-full bg-[#e6e6e6] px-[2px] pb-[2px] flex flex-col">
        <MenuBar />
        <ControlBar />
        <div className="flex-1 flex min-h-0">
          <Toolbox />
          <DocArea />
          <div className="w-[367px] shrink-0 flex flex-col bg-[#3a3a3a]">
            <div className="h-[9px] shrink-0 bg-[#3c3c3c]" />
            <div className="flex-1 flex min-h-0">
              <Dock />
              <div className="w-[188px] shrink-0 flex flex-col">
                <CharacterPanel />
                <ParagraphPanel />
                <LinksPanel />
              </div>
              <div className="flex-1 ml-px flex flex-col min-w-0">
                <PagesPanel />
                <ColourPanel />
                <GradientPanel />
                <SwatchesPanel />
                <LayersPanel />
              </div>
            </div>
          </div>
        </div>
      </div>
    </div>
  );
}
